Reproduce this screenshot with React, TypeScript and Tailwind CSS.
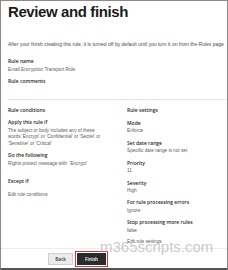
import React from "react";

const body = { fontFamily: '"Liberation Sans", Arial, sans-serif' };
const semi = { fontFamily: '"Open Sans", "Liberation Sans", Arial, sans-serif' };

function Label({ children, className = "" }: { children: React.ReactNode; className?: string }) {
  return <div style={semi} className={`text-[5px] leading-[6px] font-semibold text-[#1f1f1f] whitespace-nowrap ${className}`}>{children}</div>;
}
function Value({ children, className = "" }: { children: React.ReactNode; className?: string }) {
  return <div className={`text-[4.7px] leading-[6px] text-[#5a5a5a] whitespace-nowrap ${className}`}>{children}</div>;
}

export default function App() {
  return (
    <div className="relative w-[228px] h-[270px] bg-white overflow-hidden" style={body}>
      <div className="flex flex-col h-[270px] border-l border-t border-r border-[#8a8a8a] border-b-2 border-b-[#555555]">
        <div className="px-[7px]">
          <div className="pt-[3px] text-[15px] leading-[16px] font-bold tracking-[-0.4px] text-[#1b1b1b]">Review and finish</div>
          <div className="mt-[21px] text-[5px] leading-[6px] text-[#4a4a4a] whitespace-nowrap">
            After your finish creating this rule, it is turned off by default until you turn it on from the Rules page
          </div>
          <Label className="mt-[11px]">Rule name</Label>
          <Value className="mt-[3px]">Email Encryption Transport Rule</Value>
          <Label className="mt-[5px]">Rule comments</Label>
        </div>
        <div className="mt-[15px] ml-[7px] h-px bg-[#e8e8e8]" />
        <div className="flex h-[148px] px-[7px]">
          <div className="w-[119px] flex flex-col">
            <Label className="mt-[7px]">Rule conditions</Label>
            <Label className="mt-[6px]">Apply this rule if</Label>
            <div className="mt-[3px] text-[4.7px] leading-[6.3px] text-[#5a5a5a] w-[100px]">
              The subject or body includes any of these<br />words 'Encrypt' or 'Confidential' or 'Secret' or<br />'Sensitive' or 'Critical'
            </div>
            <Label className="mt-[5px]">Do the following</Label>
            <Value className="mt-[3px]">Rights protect message with&nbsp; 'Encrypt'</Value>
            <Label className="mt-[11.5px]">Except if</Label>
            <Value className="mt-[7.5px]">Edit rule conditions</Value>
          </div>
          <div className="flex flex-col">
            <Label className="mt-[7px]">Rule settings</Label>
            <Label className="mt-[7px]">Mode</Label>
            <Value className="mt-[2px]">Enforce</Value>
            <Label className="mt-[6px]">Set date range</Label>
            <Value className="mt-[2px]">Specific date range is not set</Value>
            <Label className="mt-[6px]">Priority</Label>
            <Value className="mt-[2px]">11</Value>
            <Label className="mt-[5.5px]">Severity</Label>
            <Value className="mt-[2.5px]">High</Value>
            <Label className="mt-[5px]">For rule processing errors</Label>
            <Value className="mt-[3px]">Ignore</Value>
            <Label className="mt-[5px]">Stop processing more rules</Label>
            <Value className="mt-[3px]">false</Value>
            <Value className="mt-[5px]">Edit rule settings</Value>
          </div>
        </div>
        <div className="h-px bg-[#ececec]" />
        <div className="flex items-center pl-[47px] pt-[2px] gap-[2px]">
          <div style={semi} className="w-[25px] h-[12px] bg-[#ececec] border border-[#cfcfcf] flex items-center justify-center text-[4.6px] font-semibold text-[#333]">Back</div>
          <div className="border border-[#d0333a] p-px">
            <div style={semi} className="w-[29px] h-[12px] bg-[#2b2b2b] flex items-center justify-center text-[4.6px] font-semibold text-white">Finish</div>
          </div>
        </div>
      </div>
      <div className="absolute left-[100px] top-[239px] text-[15px] leading-[15px] text-[#bcbcbc]/80 whitespace-nowrap pointer-events-none">m365scripts.com</div>
    </div>
  );
}
